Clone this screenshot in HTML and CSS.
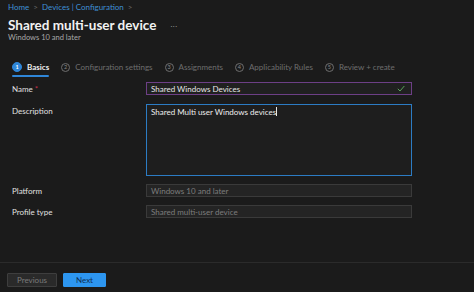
FILE: index.html
```html
<!DOCTYPE html>
<html>
<head>
<meta charset="utf-8">
<link rel="stylesheet" href="styles.css">
</head>
<body>
<div class="page">
  <header class="head">
    <nav class="crumbs"><span>Home</span><span class="sep">&gt;</span><span>Devices | Configuration</span><span class="sep">&gt;</span></nav>
    <div class="title-row"><h1 class="title">Shared multi-user device</h1><span class="more">...</span></div>
    <div class="subtitle">Windows 10 and later</div>
  </header>
  <div class="steps">
    <div class="step active"><span class="num">1</span><span class="lbl">Basics</span></div>
    <div class="step"><span class="num">2</span><span class="lbl">Configuration settings</span></div>
    <div class="step"><span class="num">3</span><span class="lbl">Assignments</span></div>
    <div class="step"><span class="num">4</span><span class="lbl">Applicability Rules</span></div>
    <div class="step"><span class="num">5</span><span class="lbl">Review + create</span></div>
  </div>
  <div class="form">
    <div class="row r-name">
      <label class="label">Name <span class="req">*</span></label>
      <div class="input name-input"><span>Shared Windows Devices</span>
        <svg class="check" width="8" height="7" viewBox="0 0 8 7"><path d="M0.8 3.8 L3 6 L7.3 1" fill="none" stroke="#5aa35a" stroke-width="1"/></svg>
      </div>
    </div>
    <div class="row r-desc">
      <label class="label">Description</label>
      <div class="textarea"><span>Shared Multi user Windows devices</span><span class="caret"></span></div>
    </div>
    <div class="row r-plat">
      <label class="label">Platform</label>
      <div class="input disabled">Windows 10 and later</div>
    </div>
    <div class="row r-prof">
      <label class="label">Profile type</label>
      <div class="input disabled">Shared multi-user device</div>
    </div>
  </div>
  <footer class="foot">
    <button class="btn prev">Previous</button>
    <button class="btn next">Next</button>
  </footer>
</div>
</body>
</html>
```

FILE: styles.css
```css
* { box-sizing: border-box; }
html, body { margin: 0; padding: 0; }
body {
  background: #1b1b1b;
  font-family: "Lato", "Noto Sans", sans-serif;
  color: #e6e6e6;
  width: 474px;
  height: 292px;
  overflow: hidden;
}
.page { display: flex; flex-direction: column; height: 292px; }
.head { padding: 0 0 0 8px; }
.crumbs {
  display: flex; gap: 4px; align-items: center;
  height: 13px; font-size: 8px; color: #3f8fd6; padding-top: 1px;
}
.crumbs .sep { color: #6a6a6a; }
.title-row { display: flex; align-items: center; gap: 14px; height: 20px; margin-top: 2px; }
.title { margin: 0; font-size: 13.5px; font-weight: 700; color: #f2f2f2; letter-spacing: 0; }
.more { color: #9a9a9a; font-size: 8px; letter-spacing: 0.5px; padding-bottom: 3px; }
.subtitle { font-size: 7.5px; color: #a8a8a8; margin-top: -2px; height: 10px; }
.steps {
  display: flex; align-items: center; gap: 0;
  padding-left: 12px; margin-top: 17px; height: 14px;
}
.step { display: flex; align-items: center; gap: 5px; font-size: 8px; color: #6e6e6e; margin-right: 12px; height: 14px; position: relative; }
.step .num {
  width: 9px; height: 9px; border-radius: 50%; border: 1px solid #6e6e6e;
  font-size: 5.5px; display: flex; align-items: center; justify-content: center; color: #8a8a8a;
}
.step.active { color: #f0f0f0; font-weight: 700; }
.step.active .num { background: #2f86d8; border-color: #2f86d8; color: #fff; width: 10px; height: 10px; }
.step.active::after {
  content: ""; position: absolute; left: 0; right: 0; bottom: -3px; height: 2px; background: #2f86d8; border-radius: 1px;
}
.form { padding-left: 12px; margin-top: 8px; display: flex; flex-direction: column; }
.row { display: flex; align-items: flex-start; }
.label { width: 134px; font-size: 8px; color: #e0e0e0; }
.req { color: #c4314b; }
.input {
  width: 266px; height: 13px; border: 1px solid #3b3b3b; background: #202020;
  font-size: 8px; display: flex; align-items: center; padding: 0 4px; color: #e8e8e8;
}
.r-name { align-items: center; }
.name-input { border-color: #6d3f86; justify-content: space-between; padding-right: 6px; }
.r-desc { margin-top: 9px; }
.r-desc .label { padding-top: 2px; }
.textarea {
  width: 266px; height: 72px; border: 1px solid #2c7cc4; background: #1e1e1e;
  font-size: 8px; padding: 2px 4px; display: flex; align-items: flex-start; color: #eeeeee;
}
.caret { display: inline-block; width: 1px; height: 9px; background: #e6e6e6; margin-left: 0; }
.r-plat { margin-top: 8px; align-items: center; }
.r-prof { margin-top: 8px; align-items: center; }
.disabled { background: #242424; border-color: #3a3a3a; color: #7d7d7d; }
.foot {
  margin-top: auto; border-top: 1px solid #2b2b2b; height: 30px;
  display: flex; align-items: flex-start; gap: 6px; padding: 10px 0 0 7px;
}
.btn {
  height: 14px; font-size: 8px; font-family: inherit; border-radius: 1px; padding: 0; display: flex; align-items: center; justify-content: center;
}
.prev { width: 50px; background: #2a2a2a; border: 1px solid #3e3e3e; color: #7a7a7a; }
.next { width: 43px; background: #2d96f0; border: 1px solid #2d96f0; color: #0f2f55; }
```
